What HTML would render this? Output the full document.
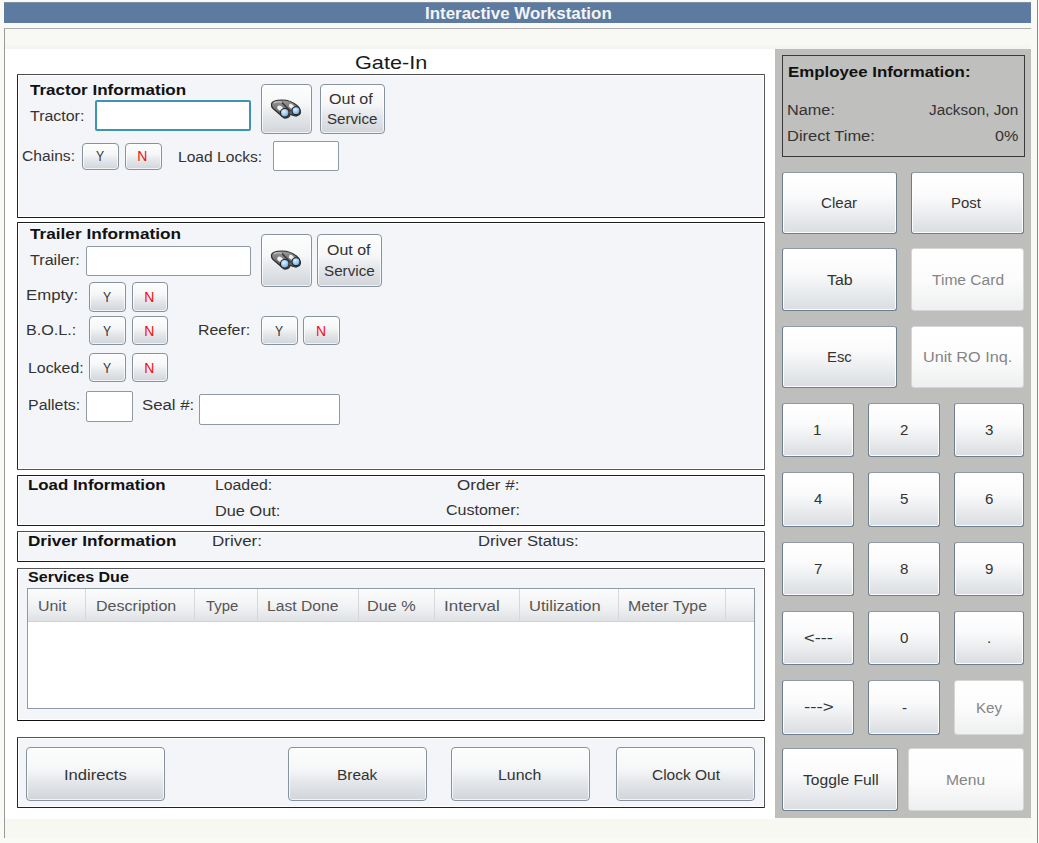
<!DOCTYPE html><html><head><meta charset="utf-8"><style>
*{margin:0;padding:0}
html,body{width:1039px;height:843px;overflow:hidden;background:#f9f9f5;position:relative}
.a,.fs,.btn,.inp,.tbl,.thd,.sep,.emp,.pb,.pbd,.t{position:absolute}
.fs{box-sizing:border-box;border:1px solid #262626;border-top-color:#555;border-right-color:#555;border-radius:1px;background:#f4f5f8;box-shadow:inset 0 0 0 1px #ffffff}
.btn{box-sizing:border-box;border:1px solid #86929d;border-radius:4px;background:linear-gradient(#fdfdfd 0%,#f6f7f8 40%,#e4e7ea 65%,#d1d5da 100%);box-shadow:inset 0 0 0 1px rgba(255,255,255,.7)}
.inp{box-sizing:border-box;border:1px solid #8d99a5;border-radius:2px;background:#fff}
.inp.foc{border:2px solid #3b96b2;border-radius:2px}
.tbl{box-sizing:border-box;border:1px solid #8e9aa5;background:#fff}
.thd{background:linear-gradient(#fcfcfc 0%,#f2f3f4 50%,#dfe2e5 100%);border-bottom:1px solid #d0d3d6;box-sizing:border-box}
.sep{background:#d6d8db}
.emp{box-sizing:border-box;border:1px solid #3a3a3a;background:#bfbfbd}
.pb{box-sizing:border-box;border:1px solid #6f7e8c;border-top-color:#8e9ba7;border-radius:3px;background:linear-gradient(#ffffff 0%,#fbfbfc 38%,#eceef0 65%,#dadde1 100%);box-shadow:inset 0 0 0 1px rgba(255,255,255,.9)}
.pbd{box-sizing:border-box;border:1px solid #d6d6d6;border-radius:3px;background:linear-gradient(#ffffff 0%,#fcfcfc 50%,#eeeff0 100%)}
.t{white-space:nowrap;line-height:1;transform-origin:0 0;font-family:"Liberation Sans",sans-serif}
</style></head><body><div class="a" style="left:4px;top:2px;width:1027px;height:21px;background:#5d7ba1;border-top:1px solid #7f8fa3;box-sizing:border-box"></div>
<div class="a" style="left:4px;top:28px;width:1027px;height:810px;border-left:1px solid #9a9a9a;border-top:1px solid #adadad;box-sizing:border-box;background:linear-gradient(#f8f8f4 0,#f8f8f4 14px,#f3f3ef 20px,#f8f8f3 21px)"></div>
<div class="a" style="left:5px;top:49px;width:770px;height:770px;background:#ffffff"></div>
<div class="a" style="left:1037px;top:0px;width:1px;height:843px;background:#8c8c8c"></div>
<div class="a" style="left:775px;top:49px;width:256px;height:769px;background:#bebebc"></div>
<div class="fs" style="left:17px;top:74px;width:748px;height:144px;border-top-color:#4e4e4e;border-bottom-color:#1c1c1c"></div>
<div class="fs" style="left:17px;top:222px;width:748px;height:248px;border-top-color:#1c1c1c;border-bottom-color:#555"></div>
<div class="fs" style="left:17px;top:475px;width:748px;height:51px;border-top-color:#1c1c1c;border-bottom-color:#1c1c1c"></div>
<div class="fs" style="left:17px;top:531px;width:748px;height:31px;border-top-color:#4e4e4e;border-bottom-color:#1c1c1c"></div>
<div class="fs" style="left:17px;top:568px;width:748px;height:153px;border-top-color:#555;border-bottom-color:#111"></div>
<div class="fs" style="left:17px;top:737px;width:748px;height:71px;border-top-color:#555;border-bottom-color:#222"></div>
<div class="inp foc" style="left:95px;top:100.3px;width:156px;height:30.5px;"></div>
<div class="btn" style="left:261.3px;top:83.7px;width:50.5px;height:50.8px;"></div>
<svg class="a" style="left:262px;top:91px" width="48" height="38" viewBox="0 0 48 38"><defs><radialGradient id="ln91" cx="0.4" cy="0.35" r="0.7"><stop offset="0" stop-color="#e2f4ff"/><stop offset="1" stop-color="#6eaee6"/></radialGradient><linearGradient id="br91" x1="0" y1="0" x2="0" y2="1"><stop offset="0" stop-color="#9a9a9a"/><stop offset="1" stop-color="#4e4e4e"/></linearGradient></defs><path d="M9.5 13 C10 9.5 14 9 20 9 C26 9 31 11 35 14.5 C38 17 39.5 21 37.5 23.5 L34 25 L28 23.5 C27.5 26.5 24.5 27.5 22 27 L11 17.5 C9.5 16 9.3 14.5 9.5 13 Z" fill="url(#br91)" stroke="#2e2e2e" stroke-width="1.2"/><path d="M19.5 11 L28.5 20.5" stroke="#3a3a3a" stroke-width="1.6"/><path d="M12 12 C15 10.5 18 10.5 20 11.5" stroke="#c8c8c8" stroke-width="1.2" fill="none"/><ellipse cx="18.3" cy="17.3" rx="3.3" ry="2.3" transform="rotate(35 18.3 17.3)" fill="#f2f2f2"/><ellipse cx="29.4" cy="15.3" rx="2.8" ry="2" transform="rotate(35 29.4 15.3)" fill="#eeeeee"/><circle cx="22.6" cy="21.8" r="4.8" fill="#262626"/><circle cx="22.7" cy="21.7" r="3.7" fill="url(#ln91)"/><circle cx="33.9" cy="19.8" r="4.5" fill="#262626"/><circle cx="34" cy="19.7" r="3.4" fill="url(#ln91)"/></svg>
<div class="btn" style="left:320px;top:83.7px;width:65px;height:50.8px;"></div>
<div class="btn" style="left:82.2px;top:142.8px;width:36.5px;height:27.7px;"></div>
<div class="btn" style="left:124.8px;top:142.8px;width:36.8px;height:27.7px;"></div>
<div class="inp" style="left:272.6px;top:141.4px;width:66.9px;height:30.1px;"></div>
<div class="inp" style="left:86.4px;top:245.5px;width:164.6px;height:30.6px;"></div>
<div class="btn" style="left:261.3px;top:234px;width:50.5px;height:52.8px;"></div>
<svg class="a" style="left:262px;top:242px" width="48" height="38" viewBox="0 0 48 38"><defs><radialGradient id="ln242" cx="0.4" cy="0.35" r="0.7"><stop offset="0" stop-color="#e2f4ff"/><stop offset="1" stop-color="#6eaee6"/></radialGradient><linearGradient id="br242" x1="0" y1="0" x2="0" y2="1"><stop offset="0" stop-color="#9a9a9a"/><stop offset="1" stop-color="#4e4e4e"/></linearGradient></defs><path d="M9.5 13 C10 9.5 14 9 20 9 C26 9 31 11 35 14.5 C38 17 39.5 21 37.5 23.5 L34 25 L28 23.5 C27.5 26.5 24.5 27.5 22 27 L11 17.5 C9.5 16 9.3 14.5 9.5 13 Z" fill="url(#br242)" stroke="#2e2e2e" stroke-width="1.2"/><path d="M19.5 11 L28.5 20.5" stroke="#3a3a3a" stroke-width="1.6"/><path d="M12 12 C15 10.5 18 10.5 20 11.5" stroke="#c8c8c8" stroke-width="1.2" fill="none"/><ellipse cx="18.3" cy="17.3" rx="3.3" ry="2.3" transform="rotate(35 18.3 17.3)" fill="#f2f2f2"/><ellipse cx="29.4" cy="15.3" rx="2.8" ry="2" transform="rotate(35 29.4 15.3)" fill="#eeeeee"/><circle cx="22.6" cy="21.8" r="4.8" fill="#262626"/><circle cx="22.7" cy="21.7" r="3.7" fill="url(#ln242)"/><circle cx="33.9" cy="19.8" r="4.5" fill="#262626"/><circle cx="34" cy="19.7" r="3.4" fill="url(#ln242)"/></svg>
<div class="btn" style="left:317.1px;top:234px;width:64.6px;height:52.8px;"></div>
<div class="btn" style="left:89px;top:282px;width:36.5px;height:29.5px;"></div>
<div class="btn" style="left:131.5px;top:282px;width:36.5px;height:29.5px;"></div>
<div class="btn" style="left:89px;top:316px;width:36.5px;height:29px;"></div>
<div class="btn" style="left:131.5px;top:316px;width:36.5px;height:29px;"></div>
<div class="btn" style="left:261px;top:316px;width:36.5px;height:29px;"></div>
<div class="btn" style="left:303px;top:316px;width:36.6px;height:29px;"></div>
<div class="btn" style="left:89px;top:353px;width:36.5px;height:29px;"></div>
<div class="btn" style="left:131.5px;top:353px;width:36.5px;height:29px;"></div>
<div class="inp" style="left:86.2px;top:390.5px;width:46.6px;height:31.1px;"></div>
<div class="inp" style="left:199.1px;top:394.3px;width:140.5px;height:31.1px;"></div>
<div class="tbl" style="left:27px;top:588.2px;width:728px;height:121px;"></div>
<div class="thd" style="left:28px;top:589.2px;width:726px;height:32.5px;"></div>
<div class="sep" style="left:85.3px;top:589.2px;width:1px;height:32.5px;"></div>
<div class="sep" style="left:194.3px;top:589.2px;width:1px;height:32.5px;"></div>
<div class="sep" style="left:257.3px;top:589.2px;width:1px;height:32.5px;"></div>
<div class="sep" style="left:357.7px;top:589.2px;width:1px;height:32.5px;"></div>
<div class="sep" style="left:434.3px;top:589.2px;width:1px;height:32.5px;"></div>
<div class="sep" style="left:518.8px;top:589.2px;width:1px;height:32.5px;"></div>
<div class="sep" style="left:617.6px;top:589.2px;width:1px;height:32.5px;"></div>
<div class="sep" style="left:725.2px;top:589.2px;width:1px;height:32.5px;"></div>
<div class="btn" style="left:26.2px;top:747.4px;width:138.6px;height:54.1px;"></div>
<div class="btn" style="left:287.6px;top:747.4px;width:139.3px;height:54.1px;"></div>
<div class="btn" style="left:450.5px;top:747.4px;width:139.2px;height:54.1px;"></div>
<div class="btn" style="left:616.1px;top:747.4px;width:139.4px;height:54.1px;"></div>
<div class="emp" style="left:782px;top:55.3px;width:243.2px;height:102.2px;"></div>
<div class="pb" style="left:782.2px;top:171.7px;width:114.5px;height:62.6px;"></div>
<div class="pb" style="left:910.6px;top:171.7px;width:113.8px;height:62.6px;"></div>
<div class="pb" style="left:782.2px;top:248.4px;width:114.5px;height:62.6px;"></div>
<div class="pbd" style="left:910.6px;top:248.4px;width:113.8px;height:62.6px;"></div>
<div class="pb" style="left:782.2px;top:326px;width:114.5px;height:62.4px;"></div>
<div class="pbd" style="left:910.6px;top:326px;width:113.8px;height:62.4px;"></div>
<div class="pb" style="left:782.2px;top:402.8px;width:72.1px;height:54.5px;"></div>
<div class="pb" style="left:868.2px;top:402.8px;width:72px;height:54.5px;"></div>
<div class="pb" style="left:954.2px;top:402.8px;width:70.2px;height:54.5px;"></div>
<div class="pb" style="left:782.2px;top:472px;width:72.1px;height:54.5px;"></div>
<div class="pb" style="left:868.2px;top:472px;width:72px;height:54.5px;"></div>
<div class="pb" style="left:954.2px;top:472px;width:70.2px;height:54.5px;"></div>
<div class="pb" style="left:782.2px;top:541.5px;width:72.1px;height:54.5px;"></div>
<div class="pb" style="left:868.2px;top:541.5px;width:72px;height:54.5px;"></div>
<div class="pb" style="left:954.2px;top:541.5px;width:70.2px;height:54.5px;"></div>
<div class="pb" style="left:782.2px;top:610.7px;width:72.1px;height:54.5px;"></div>
<div class="pb" style="left:868.2px;top:610.7px;width:72px;height:54.5px;"></div>
<div class="pb" style="left:954.2px;top:610.7px;width:70.2px;height:54.5px;"></div>
<div class="pb" style="left:782.2px;top:680.2px;width:72.1px;height:54.5px;"></div>
<div class="pb" style="left:868.2px;top:680.2px;width:72px;height:54.5px;"></div>
<div class="pbd" style="left:954.2px;top:680.2px;width:70.2px;height:54.5px;"></div>
<div class="pb" style="left:782.2px;top:748.2px;width:115.5px;height:63.3px;"></div>
<div class="pbd" style="left:908px;top:748.2px;width:115.5px;height:63.3px;"></div>
<span class="t" style="left:424.78px;top:4.73px;font-size:16.5px;font-weight:bold;color:#f4f4f4;transform:scaleX(1.0250)">Interactive Workstation</span>
<span class="t" style="left:354.80px;top:52.82px;font-size:19px;color:#1a1a1a;transform:scaleX(1.1402)">Gate-In</span>
<span class="t" style="left:30.00px;top:82.95px;font-size:14px;font-weight:bold;color:#111;transform:scaleX(1.2168)">Tractor Information</span>
<span class="t" style="left:30.00px;top:108.65px;font-size:14px;color:#333333;transform:scaleX(1.1384)">Tractor:</span>
<span class="t" style="left:328.80px;top:91.65px;font-size:14px;color:#333333;transform:scaleX(1.1480)">Out of</span>
<span class="t" style="left:326.50px;top:112.35px;font-size:14px;color:#333333;transform:scaleX(1.0811)">Service</span>
<span class="t" style="left:21.90px;top:149.45px;font-size:14px;color:#333333;transform:scaleX(1.1164)">Chains:</span>
<span class="t" style="left:96.20px;top:149.35px;font-size:14px;color:#333333;transform:scaleX(0.8700)">Y</span>
<span class="t" style="left:137.30px;top:149.35px;font-size:14px;color:#ee1111;transform:scaleX(1.0000)">N</span>
<span class="t" style="left:177.89px;top:149.85px;font-size:14px;color:#333333;transform:scaleX(1.1140)">Load Locks:</span>
<span class="t" style="left:30.00px;top:226.65px;font-size:14px;font-weight:bold;color:#111;transform:scaleX(1.2284)">Trailer Information</span>
<span class="t" style="left:30.00px;top:253.35px;font-size:14px;color:#333333;transform:scaleX(1.1530)">Trailer:</span>
<span class="t" style="left:326.50px;top:243.15px;font-size:14px;color:#333333;transform:scaleX(1.1401)">Out of</span>
<span class="t" style="left:323.90px;top:263.65px;font-size:14px;color:#333333;transform:scaleX(1.0875)">Service</span>
<span class="t" style="left:26.20px;top:288.15px;font-size:14px;color:#333333;transform:scaleX(1.1973)">Empty:</span>
<span class="t" style="left:103.00px;top:290.45px;font-size:14px;color:#333333;transform:scaleX(0.8700)">Y</span>
<span class="t" style="left:144.30px;top:290.45px;font-size:14px;color:#ee1111;transform:scaleX(1.0000)">N</span>
<span class="t" style="left:26.25px;top:322.85px;font-size:14px;color:#333333;transform:scaleX(1.1540)">B.O.L.:</span>
<span class="t" style="left:103.00px;top:323.75px;font-size:14px;color:#333333;transform:scaleX(0.8700)">Y</span>
<span class="t" style="left:144.30px;top:323.75px;font-size:14px;color:#ee1111;transform:scaleX(1.0000)">N</span>
<span class="t" style="left:198.46px;top:322.65px;font-size:14px;color:#333333;transform:scaleX(1.1358)">Reefer:</span>
<span class="t" style="left:275.20px;top:323.75px;font-size:14px;color:#333333;transform:scaleX(0.8600)">Y</span>
<span class="t" style="left:316.00px;top:323.75px;font-size:14px;color:#ee1111;transform:scaleX(1.0000)">N</span>
<span class="t" style="left:27.77px;top:361.35px;font-size:14px;color:#333333;transform:scaleX(1.1348)">Locked:</span>
<span class="t" style="left:103.00px;top:361.15px;font-size:14px;color:#333333;transform:scaleX(0.8700)">Y</span>
<span class="t" style="left:144.30px;top:361.15px;font-size:14px;color:#ee1111;transform:scaleX(1.0000)">N</span>
<span class="t" style="left:27.66px;top:397.85px;font-size:14px;color:#333333;transform:scaleX(1.1381)">Pallets:</span>
<span class="t" style="left:141.60px;top:397.85px;font-size:14px;color:#333333;transform:scaleX(1.1992)">Seal #:</span>
<span class="t" style="left:28.10px;top:478.35px;font-size:14px;font-weight:bold;color:#111;transform:scaleX(1.2033)">Load Information</span>
<span class="t" style="left:215.07px;top:478.35px;font-size:14px;color:#333333;transform:scaleX(1.1290)">Loaded:</span>
<span class="t" style="left:215.03px;top:503.95px;font-size:14px;color:#333333;transform:scaleX(1.1655)">Due Out:</span>
<span class="t" style="left:457.00px;top:477.75px;font-size:14px;color:#333333;transform:scaleX(1.2168)">Order #:</span>
<span class="t" style="left:445.50px;top:503.15px;font-size:14px;color:#333333;transform:scaleX(1.1447)">Customer:</span>
<span class="t" style="left:28.10px;top:534.45px;font-size:14px;font-weight:bold;color:#111;transform:scaleX(1.2227)">Driver Information</span>
<span class="t" style="left:212.29px;top:534.45px;font-size:14px;color:#333333;transform:scaleX(1.2128)">Driver:</span>
<span class="t" style="left:477.91px;top:534.25px;font-size:14px;color:#333333;transform:scaleX(1.1880)">Driver Status:</span>
<span class="t" style="left:27.50px;top:570.25px;font-size:14px;font-weight:bold;color:#111;transform:scaleX(1.1468)">Services Due</span>
<span class="t" style="left:37.86px;top:598.55px;font-size:14px;color:#555555;transform:scaleX(1.1372)">Unit</span>
<span class="t" style="left:95.65px;top:598.55px;font-size:14px;color:#555555;transform:scaleX(1.1459)">Description</span>
<span class="t" style="left:206.30px;top:598.55px;font-size:14px;color:#555555;transform:scaleX(1.0633)">Type</span>
<span class="t" style="left:267.08px;top:598.55px;font-size:14px;color:#555555;transform:scaleX(1.1184)">Last Done</span>
<span class="t" style="left:367.44px;top:598.55px;font-size:14px;color:#555555;transform:scaleX(1.1609)">Due %</span>
<span class="t" style="left:444.39px;top:598.55px;font-size:14px;color:#555555;transform:scaleX(1.2143)">Interval</span>
<span class="t" style="left:528.82px;top:598.55px;font-size:14px;color:#555555;transform:scaleX(1.1816)">Utilization</span>
<span class="t" style="left:628.17px;top:598.55px;font-size:14px;color:#555555;transform:scaleX(1.1323)">Meter Type</span>
<span class="t" style="left:63.51px;top:767.95px;font-size:14px;color:#333333;transform:scaleX(1.1867)">Indirects</span>
<span class="t" style="left:337.00px;top:767.95px;font-size:14px;color:#333333;transform:scaleX(1.0992)">Break</span>
<span class="t" style="left:498.17px;top:767.95px;font-size:14px;color:#333333;transform:scaleX(1.1332)">Lunch</span>
<span class="t" style="left:652.00px;top:767.95px;font-size:14px;color:#333333;transform:scaleX(1.1060)">Clock Out</span>
<span class="t" style="left:788.40px;top:64.85px;font-size:14px;font-weight:bold;color:#111;transform:scaleX(1.2031)">Employee Information:</span>
<span class="t" style="left:787.24px;top:103.35px;font-size:14px;color:#333333;transform:scaleX(1.1615)">Name:</span>
<span class="t" style="left:929.20px;top:103.35px;font-size:14px;color:#333333;transform:scaleX(1.0936)">Jackson, Jon</span>
<span class="t" style="left:787.22px;top:129.05px;font-size:14px;color:#333333;transform:scaleX(1.1761)">Direct Time:</span>
<span class="t" style="left:994.90px;top:129.05px;font-size:14px;color:#333333;transform:scaleX(1.1523)">0%</span>
<span class="t" style="left:821.40px;top:195.95px;font-size:14px;color:#333333;transform:scaleX(1.0771)">Clear</span>
<span class="t" style="left:951.43px;top:195.95px;font-size:14px;color:#333333;transform:scaleX(1.0655)">Post</span>
<span class="t" style="left:826.50px;top:273.15px;font-size:14px;color:#333333;transform:scaleX(1.1410)">Tab</span>
<span class="t" style="left:931.80px;top:273.15px;font-size:14px;color:#858585;transform:scaleX(1.1118)">Time Card</span>
<span class="t" style="left:826.74px;top:350.05px;font-size:14px;color:#333333;transform:scaleX(1.0610)">Esc</span>
<span class="t" style="left:922.84px;top:349.95px;font-size:14px;color:#858585;transform:scaleX(1.1579)">Unit RO Inq.</span>
<span class="t" style="left:813.39px;top:423.20px;font-size:14px;color:#333333;transform:scaleX(1.0800)">1</span>
<span class="t" style="left:899.88px;top:423.20px;font-size:14px;color:#333333;transform:scaleX(1.0800)">2</span>
<span class="t" style="left:984.98px;top:423.20px;font-size:14px;color:#333333;transform:scaleX(1.0800)">3</span>
<span class="t" style="left:813.93px;top:492.40px;font-size:14px;color:#333333;transform:scaleX(1.0800)">4</span>
<span class="t" style="left:899.88px;top:492.40px;font-size:14px;color:#333333;transform:scaleX(1.0800)">5</span>
<span class="t" style="left:984.98px;top:492.40px;font-size:14px;color:#333333;transform:scaleX(1.0800)">6</span>
<span class="t" style="left:813.93px;top:561.90px;font-size:14px;color:#333333;transform:scaleX(1.0800)">7</span>
<span class="t" style="left:899.88px;top:561.90px;font-size:14px;color:#333333;transform:scaleX(1.0800)">8</span>
<span class="t" style="left:984.98px;top:561.90px;font-size:14px;color:#333333;transform:scaleX(1.0800)">9</span>
<span class="t" style="left:804.00px;top:631.15px;font-size:14px;color:#333333;transform:scaleX(1.3067)">&lt;---</span>
<span class="t" style="left:899.88px;top:631.10px;font-size:14px;color:#333333;transform:scaleX(1.0800)">0</span>
<span class="t" style="left:987.14px;top:631.10px;font-size:14px;color:#333333;transform:scaleX(1.0800)">.</span>
<span class="t" style="left:803.60px;top:699.95px;font-size:14px;color:#333333;transform:scaleX(1.3372)">---&gt;</span>
<span class="t" style="left:901.50px;top:700.60px;font-size:14px;color:#333333;transform:scaleX(1.0800)">-</span>
<span class="t" style="left:975.73px;top:700.60px;font-size:14px;color:#858585;transform:scaleX(1.0800)">Key</span>
<span class="t" style="left:802.70px;top:773.05px;font-size:14px;color:#333333;transform:scaleX(1.1170)">Toggle Full</span>
<span class="t" style="left:946.38px;top:773.05px;font-size:14px;color:#858585;transform:scaleX(1.1163)">Menu</span></body></html>
